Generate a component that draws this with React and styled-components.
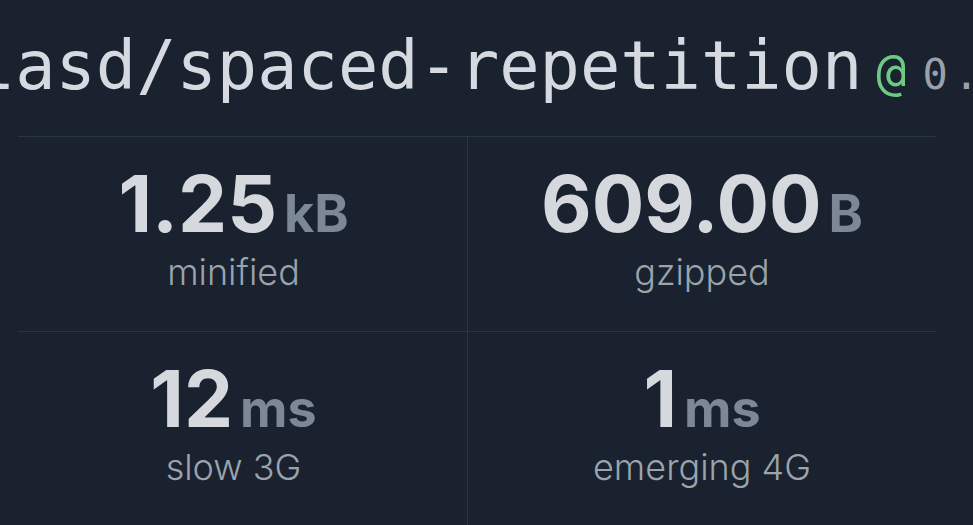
import React from 'react';
import styled, { createGlobalStyle } from 'styled-components';

const GlobalStyle = createGlobalStyle`
  html, body {
    margin: 0;
    padding: 0;
    background: #19222e;
    overflow: hidden;
  }
`;

const Page = styled.div`
  width: 973px;
  height: 525px;
  overflow: hidden;
  background: #19222e;
`;

// package name overflows the window on both sides, centered like the original
const Header = styled.header`
  display: flex;
  justify-content: center;
  height: 136px;
  padding-top: 33px;
  box-sizing: border-box;
  white-space: nowrap;
`;

const Title = styled.h1`
  margin: 0;
  font-family: 'DejaVu Sans Mono', monospace;
  font-weight: 400;
  font-size: 67px;
  line-height: 67px;
  color: #d6dae0;
`;

const At = styled.span`
  font-size: 50px;
  color: #6fc985;
  margin: 0 16px 0 14px;
`;

const Version = styled.span`
  font-size: 42px;
  letter-spacing: 6px;
  color: #9aa1aa;
`;

const Grid = styled.section`
  display: grid;
  grid-template-columns: 1fr 1fr;
  width: 936px;
`;

const Rule = styled.div`
  grid-column: 1 / -1;
  height: 1px;
  margin-left: 18px;
  background: #2a3542;
`;

const Stat = styled.div`
  display: flex;
  flex-direction: column;
  align-items: center;
  height: 194px;
  padding-top: 29px;
  box-sizing: border-box;
  border-right: ${(p) => (p.$divider ? '1px solid #2a3542' : 'none')};
`;

const Value = styled.div`
  display: flex;
  align-items: baseline;
  font-family: Inter, 'Noto Sans', sans-serif;
  font-weight: 700;
  line-height: 76px;
`;

const Number = styled.span`
  font-size: 78px;
  color: #d5d8dd;
`;

const Unit = styled.span`
  font-size: 52px;
  color: #7c8797;
  margin-left: 7px;
`;

const Label = styled.div`
  margin-top: 2px;
  font-family: Inter, 'Noto Sans', sans-serif;
  font-weight: 300;
  font-size: 36px;
  line-height: 36px;
  color: #9ba3ad;
`;

const stats = [
  { value: '1.25', unit: 'kB', label: 'minified' },
  { value: '609.00', unit: 'B', label: 'gzipped' },
  { value: '12', unit: 'ms', label: 'slow 3G' },
  { value: '1', unit: 'ms', label: 'emerging 4G' },
];

const StatBox = ({ value, unit, label, divider }) => (
  <Stat $divider={divider}>
    <Value>
      <Number>{value}</Number>
      <Unit>{unit}</Unit>
    </Value>
    <Label>{label}</Label>
  </Stat>
);

export default function App() {
  return (
    <Page>
      <GlobalStyle />
      <Header>
        <Title>
          @vlasd/spaced-repetition
          <At>@</At>
          <Version>0.2.1</Version>
        </Title>
      </Header>
      <Grid>
        <Rule />
        <StatBox {...stats[0]} divider />
        <StatBox {...stats[1]} />
        <Rule />
        <StatBox {...stats[2]} divider />
        <StatBox {...stats[3]} />
      </Grid>
    </Page>
  );
}
